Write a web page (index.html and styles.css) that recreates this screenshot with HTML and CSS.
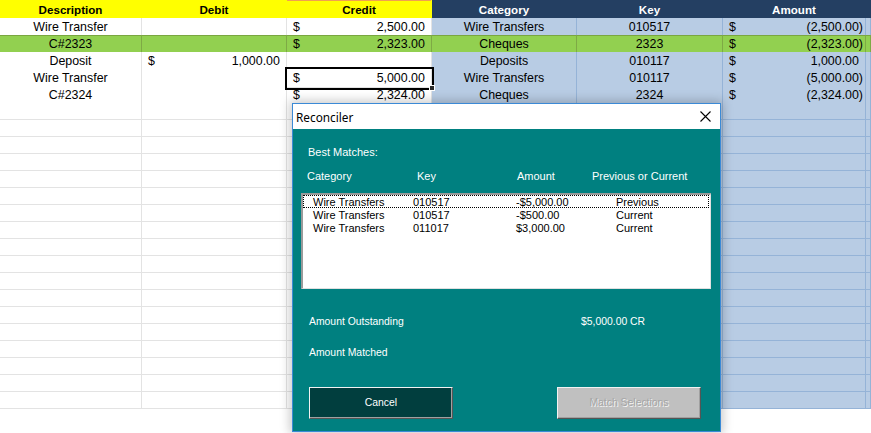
FILE: index.html
```html
<!DOCTYPE html>
<html>
<head>
<meta charset="utf-8">
<link rel="stylesheet" href="styles.css">
</head>
<body>
<div class="sheet">
  <div class="row head">
    <div class="cell hy">Description</div>
    <div class="cell hy">Debit</div>
    <div class="cell hy hc">Credit</div>
    <div class="cell hn">Category</div>
    <div class="cell hn">Key</div>
    <div class="cell hn">Amount</div>
    <div class="cell hn"></div>
  </div>
  <div class="row">
    <div class="cell w ctr">Wire Transfer</div>
    <div class="cell w"></div>
    <div class="cell w acc"><span>$</span><span>2,500.00<i>)</i></span></div>
    <div class="cell b ctr">Wire Transfers</div>
    <div class="cell b ctr">010517</div>
    <div class="cell b acc"><span>$</span><span>(2,500.00)</span></div>
    <div class="cell b"></div>
  </div>
  <div class="row">
    <div class="cell g ctr">C#2323</div>
    <div class="cell g"></div>
    <div class="cell g acc"><span>$</span><span>2,323.00<i>)</i></span></div>
    <div class="cell g ctr">Cheques</div>
    <div class="cell g ctr">2323</div>
    <div class="cell g acc"><span>$</span><span>(2,323.00)</span></div>
    <div class="cell g"></div>
  </div>
  <div class="row">
    <div class="cell w ctr">Deposit</div>
    <div class="cell w acc"><span>$</span><span>1,000.00<i>)</i></span></div>
    <div class="cell w"></div>
    <div class="cell b ctr">Deposits</div>
    <div class="cell b ctr">010117</div>
    <div class="cell b acc"><span>$</span><span>1,000.00<i>)</i></span></div>
    <div class="cell b"></div>
  </div>
  <div class="row">
    <div class="cell w ctr">Wire Transfer</div>
    <div class="cell w"></div>
    <div class="cell w acc sel"><span>$</span><span>5,000.00<i>)</i></span></div>
    <div class="cell b ctr">Wire Transfers</div>
    <div class="cell b ctr">010117</div>
    <div class="cell b acc"><span>$</span><span>(5,000.00)</span></div>
    <div class="cell b"></div>
  </div>
  <div class="row">
    <div class="cell w ctr">C#2324</div>
    <div class="cell w"></div>
    <div class="cell w acc"><span>$</span><span>2,324.00<i>)</i></span></div>
    <div class="cell b ctr">Cheques</div>
    <div class="cell b ctr">2324</div>
    <div class="cell b acc"><span>$</span><span>(2,324.00)</span></div>
    <div class="cell b"></div>
  </div>
  <div class="row"><div class="cell w"></div><div class="cell w"></div><div class="cell w"></div><div class="cell b"></div><div class="cell b"></div><div class="cell b"></div><div class="cell b"></div></div>
  <div class="row"><div class="cell w"></div><div class="cell w"></div><div class="cell w"></div><div class="cell b"></div><div class="cell b"></div><div class="cell b"></div><div class="cell b"></div></div>
  <div class="row"><div class="cell w"></div><div class="cell w"></div><div class="cell w"></div><div class="cell b"></div><div class="cell b"></div><div class="cell b"></div><div class="cell b"></div></div>
  <div class="row"><div class="cell w"></div><div class="cell w"></div><div class="cell w"></div><div class="cell b"></div><div class="cell b"></div><div class="cell b"></div><div class="cell b"></div></div>
  <div class="row"><div class="cell w"></div><div class="cell w"></div><div class="cell w"></div><div class="cell b"></div><div class="cell b"></div><div class="cell b"></div><div class="cell b"></div></div>
  <div class="row"><div class="cell w"></div><div class="cell w"></div><div class="cell w"></div><div class="cell b"></div><div class="cell b"></div><div class="cell b"></div><div class="cell b"></div></div>
  <div class="row"><div class="cell w"></div><div class="cell w"></div><div class="cell w"></div><div class="cell b"></div><div class="cell b"></div><div class="cell b"></div><div class="cell b"></div></div>
  <div class="row"><div class="cell w"></div><div class="cell w"></div><div class="cell w"></div><div class="cell b"></div><div class="cell b"></div><div class="cell b"></div><div class="cell b"></div></div>
  <div class="row"><div class="cell w"></div><div class="cell w"></div><div class="cell w"></div><div class="cell b"></div><div class="cell b"></div><div class="cell b"></div><div class="cell b"></div></div>
  <div class="row"><div class="cell w"></div><div class="cell w"></div><div class="cell w"></div><div class="cell b"></div><div class="cell b"></div><div class="cell b"></div><div class="cell b"></div></div>
  <div class="row"><div class="cell w"></div><div class="cell w"></div><div class="cell w"></div><div class="cell b"></div><div class="cell b"></div><div class="cell b"></div><div class="cell b"></div></div>
  <div class="row"><div class="cell w"></div><div class="cell w"></div><div class="cell w"></div><div class="cell b"></div><div class="cell b"></div><div class="cell b"></div><div class="cell b"></div></div>
  <div class="row"><div class="cell w"></div><div class="cell w"></div><div class="cell w"></div><div class="cell b"></div><div class="cell b"></div><div class="cell b"></div><div class="cell b"></div></div>
  <div class="row"><div class="cell w"></div><div class="cell w"></div><div class="cell w"></div><div class="cell b"></div><div class="cell b"></div><div class="cell b"></div><div class="cell b"></div></div>
  <div class="row"><div class="cell w"></div><div class="cell w"></div><div class="cell w"></div><div class="cell b"></div><div class="cell b"></div><div class="cell b"></div><div class="cell b"></div></div>
  <div class="row"><div class="cell w"></div><div class="cell w"></div><div class="cell w"></div><div class="cell b"></div><div class="cell b"></div><div class="cell b"></div><div class="cell b"></div></div>
  <div class="row"><div class="cell w"></div><div class="cell w"></div><div class="cell w"></div><div class="cell b"></div><div class="cell b"></div><div class="cell b"></div><div class="cell b"></div></div>
  <div class="row"><div class="cell w"></div><div class="cell w"></div><div class="cell w"></div><div class="cell b"></div><div class="cell b"></div><div class="cell b"></div><div class="cell b"></div></div>
</div>

<div class="dialog">
  <div class="titlebar">
    <span class="title">Reconciler</span>
    <svg class="close" width="11" height="11" viewBox="0 0 11 11"><path d="M0.5 0.5 L10.5 10.5 M10.5 0.5 L0.5 10.5" stroke="#000" stroke-width="1.1" fill="none"/></svg>
  </div>
  <div class="body">
    <div class="best">Best Matches:</div>
    <div class="heads">
      <span>Category</span><span>Key</span><span>Amount</span><span>Previous or Current</span>
    </div>
    <div class="listbox">
      <div class="lrow focus"><span>Wire Transfers</span><span>010517</span><span>-$5,000.00</span><span>Previous</span></div>
      <div class="lrow"><span>Wire Transfers</span><span>010517</span><span>-$500.00</span><span>Current</span></div>
      <div class="lrow"><span>Wire Transfers</span><span>011017</span><span>$3,000.00</span><span>Current</span></div>
    </div>
    <div class="sum out"><span>Amount Outstanding</span><span>$5,000.00 CR</span></div>
    <div class="sum matched"><span>Amount Matched</span><span></span></div>
    <div class="buttons">
      <div class="btn cancel">Cancel</div>
      <div class="btn disabled">Match Selections</div>
    </div>
  </div>
</div>
</body>
</html>
```

FILE: styles.css
```css
html, body {
  margin: 0;
  padding: 0;
  width: 871px;
  height: 433px;
  overflow: hidden;
  background: #fff;
}
body {
  font-family: "Liberation Sans", Arial, sans-serif;
  position: relative;
}
.sheet {
  display: flex;
  flex-direction: column;
}
.row {
  display: grid;
  grid-template-columns: 142px 145px 145px 145px 146px 143px 1fr;
  height: 17px;
}
.row.head {
  height: 18px;
}
.cell {
  box-sizing: border-box;
  border-right: 1px solid #e3e3e3;
  border-bottom: 1px solid #e3e3e3;
  font-size: 12.4px;
  color: #000;
  line-height: 18px;
  white-space: nowrap;
  overflow: visible;
}
.ctr { text-align: center; }
.hy {
  background: #ffff00;
  font-weight: bold;
  font-size: 11.6px;
  text-align: center;
  border-right-color: #ffff00;
  border-bottom-color: #e8e8b0;
  line-height: 19px;
}
.hc {
  box-shadow: inset 0 1px 0 #f0a050;
}
.hn {
  background: #243f62;
  color: #fff;
  font-weight: bold;
  font-size: 11.6px;
  text-align: center;
  border-right-color: #243f62;
  border-bottom-color: #2c4a70;
  line-height: 19px;
}
.w {
  background: #fff;
}
.b {
  background: #b8cce4;
  border-right-color: #95b3d7;
  border-bottom-color: #95b3d7;
}
.g {
  background: #92d050;
  border-right-color: #7eaa45;
  border-bottom-color: #76a03c;
  box-shadow: inset 0 1px 0 #7aa640;
}
.acc {
  display: flex;
  justify-content: space-between;
  padding: 0 2px 0 6px;
}
.acc i {
  font-style: normal;
  visibility: hidden;
}
.sel {
  position: relative;
  outline: 2px solid #000;
  outline-offset: 0;
}
.sel::after {
  content: "";
  position: absolute;
  right: -4px;
  bottom: -4px;
  width: 4px;
  height: 4px;
  background: #2a2a2a;
  border: 1px solid #fff;
}

/* Dialog */
.dialog {
  position: absolute;
  left: 292px;
  top: 103px;
  width: 429px;
  height: 329px;
  box-sizing: border-box;
  border: 1px solid #3b8ad6;
  display: flex;
  flex-direction: column;
  box-shadow: 0 0 10px 2px rgba(0, 0, 0, 0.22);
  z-index: 5;
}
.titlebar {
  height: 25px;
  background: #fff;
  display: flex;
  align-items: center;
  justify-content: space-between;
  padding: 0 9px 0 3px;
  flex: none;
}
.title {
  font-family: "Noto Sans", "Liberation Sans", sans-serif;
  font-size: 11.8px;
  color: #000;
}
.close {
  display: block;
}
.body {
  flex: 1;
  background: #008080;
  color: #fff;
  display: flex;
  flex-direction: column;
  font-size: 11px;
  line-height: 14px;
}
.best {
  margin: 16px 0 0 15px;
}
.heads {
  margin: 10px 0 0 14px;
  display: grid;
  grid-template-columns: 110px 100px 75px 1fr;
}
.listbox {
  margin: 10px 0 0 8px;
  width: 410px;
  height: 96px;
  box-sizing: border-box;
  background: #fff;
  border-top: 2px solid #9a9a9a;
  border-left: 2px solid #9a9a9a;
  border-right: 1px solid #e0e0e0;
  border-bottom: 1px solid #e0e0e0;
  color: #000;
  font-size: 11px;
  line-height: 14px;
  padding: 0 1px 0 0;
}
.lrow {
  display: grid;
  grid-template-columns: 100px 103px 100px 1fr;
  padding-left: 10px;
  height: 13px;
  box-sizing: border-box;
  white-space: nowrap;
}
.lrow.focus {
  outline: 1px dotted #000;
  outline-offset: -1px;
}
.sum {
  display: grid;
  grid-template-columns: 272px 1fr;
  margin-left: 16px;
  font-size: 10.4px;
}
.out { margin-top: 26px; }
.matched { margin-top: 17px; }
.buttons {
  display: flex;
  gap: 104px;
  margin: 27px 0 0 16px;
}
.btn {
  width: 144px;
  height: 32px;
  box-sizing: border-box;
  display: flex;
  align-items: center;
  justify-content: center;
  font-size: 10.4px;
  border-top: 1px solid #f2f2f2;
  border-left: 1px solid #f2f2f2;
  border-right: 1px solid #555;
  border-bottom: 1px solid #555;
  box-shadow: inset -1px -1px 0 #a0a0a0;
}
.cancel {
  background: #013e3e;
  color: #fff;
}
.disabled {
  background: #c0c0c0;
  color: #a6a6a6;
  text-shadow: 1px 1px 0 #f4f4f4;
}
```
